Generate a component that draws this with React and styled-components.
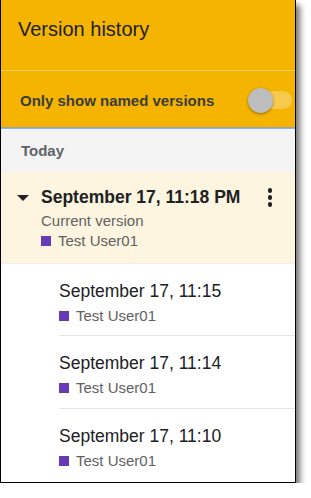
import styled, { createGlobalStyle } from "styled-components";

const GlobalStyle = createGlobalStyle`
  html, body { margin: 0; padding: 0; background: #fff; }
  body { font-family: "Liberation Sans", Arial, sans-serif; }
  * { box-sizing: border-box; }
`;

const Panel = styled.div`
  width: 296px;
  height: 483px;
  border: 1px solid #000;
  border-top: none;
  background: #fff;
  overflow: hidden;
  box-shadow: 4px 5px 6px rgba(0, 0, 0, 0.55);
  display: flex;
  flex-direction: column;
`;

const Header = styled.div`
  background: #f4b400;
  border-bottom: 1px solid #a0a0a0;
`;

const TitleBar = styled.div`
  height: 71px;
  padding: 0 0 12px 17px;
  display: flex;
  align-items: center;
  border-bottom: 1px solid rgba(255, 255, 255, 0.35);
  h1 {
    margin: 0;
    font-size: 20px;
    font-weight: 400;
    color: #202124;
  }
`;

const FilterRow = styled.div`
  height: 56px;
  padding: 3px 3px 0 19px;
  display: flex;
  align-items: center;
  justify-content: space-between;
  span {
    font-size: 15px;
    font-weight: 700;
    color: #3c3c3c;
  }
`;

const Switch = styled.div`
  position: relative;
  width: 40px;
  height: 18px;
  margin-top: -2px;
  border-radius: 9px;
  background: rgba(255, 255, 255, 0.3);
  &::after {
    content: "";
    position: absolute;
    left: -4px;
    top: -3px;
    width: 25px;
    height: 25px;
    border-radius: 50%;
    background: #bdbdbd;
    box-shadow: 0 1px 3px rgba(0, 0, 0, 0.4);
  }
`;

const DayLabel = styled.div`
  height: 45px;
  border-top: 1px solid #8ab4f8;
  background: #f4f4f4;
  padding: 0 20px;
  display: flex;
  align-items: center;
  font-size: 15px;
  font-weight: 700;
  color: #5f6368;
`;

const Current = styled.div`
  background: #fef5e1;
  height: 92px;
  padding: 15px 16px 0 16px;
  display: flex;
  align-items: flex-start;
  border-bottom: 1px solid #eeeeee;
`;

const Caret = styled.div`
  width: 0;
  height: 0;
  margin: 8px 12px 0 0;
  border-left: 6px solid transparent;
  border-right: 6px solid transparent;
  border-top: 6px solid #202124;
`;

const Body = styled.div`
  flex: 1;
  display: flex;
  flex-direction: column;
`;

const When = styled.div`
  font-size: 17.5px;
  line-height: 21px;
  font-weight: ${(p) => (p.$bold ? 700 : 400)};
  color: #202124;
`;

const Sub = styled.div`
  font-size: 15px;
  line-height: 18px;
  margin-top: 4px;
  color: #616161;
`;

const Author = styled.div`
  display: flex;
  align-items: center;
  gap: 7px;
  font-size: 15px;
  line-height: 18px;
  margin-top: ${(p) => p.$gap}px;
  color: #616161;
  &::before {
    content: "";
    width: 10px;
    height: 10px;
    background: #673ab7;
  }
`;

const Menu = styled.div`
  display: flex;
  flex-direction: column;
  gap: 2.5px;
  margin: 1px 7px 0 0;
  i {
    width: 4.5px;
    height: 4.5px;
    border-radius: 50%;
    background: #202124;
  }
`;

const Item = styled.div`
  margin-left: 58px;
  height: 73.5px;
  padding-top: 17px;
  border-bottom: ${(p) => (p.$last ? "none" : "1px solid #e6e6e6")};
`;

const versions = ["11:15", "11:14", "11:10"];

export default function App() {
  return (
    <>
      <GlobalStyle />
      <Panel>
        <Header>
          <TitleBar>
            <h1>Version history</h1>
          </TitleBar>
          <FilterRow>
            <span>Only show named versions</span>
            <Switch />
          </FilterRow>
        </Header>
        <DayLabel>Today</DayLabel>
        <Current>
          <Caret />
          <Body>
            <When $bold>September 17, 11:18 PM</When>
            <Sub>Current version</Sub>
            <Author $gap={2}>Test User01</Author>
          </Body>
          <Menu>
            <i />
            <i />
            <i />
          </Menu>
        </Current>
        {versions.map((t, i) => (
          <Item key={t} $last={i === versions.length - 1}>
            <When>September 17, {t}</When>
            <Author $gap={5}>Test User01</Author>
          </Item>
        ))}
      </Panel>
    </>
  );
}
